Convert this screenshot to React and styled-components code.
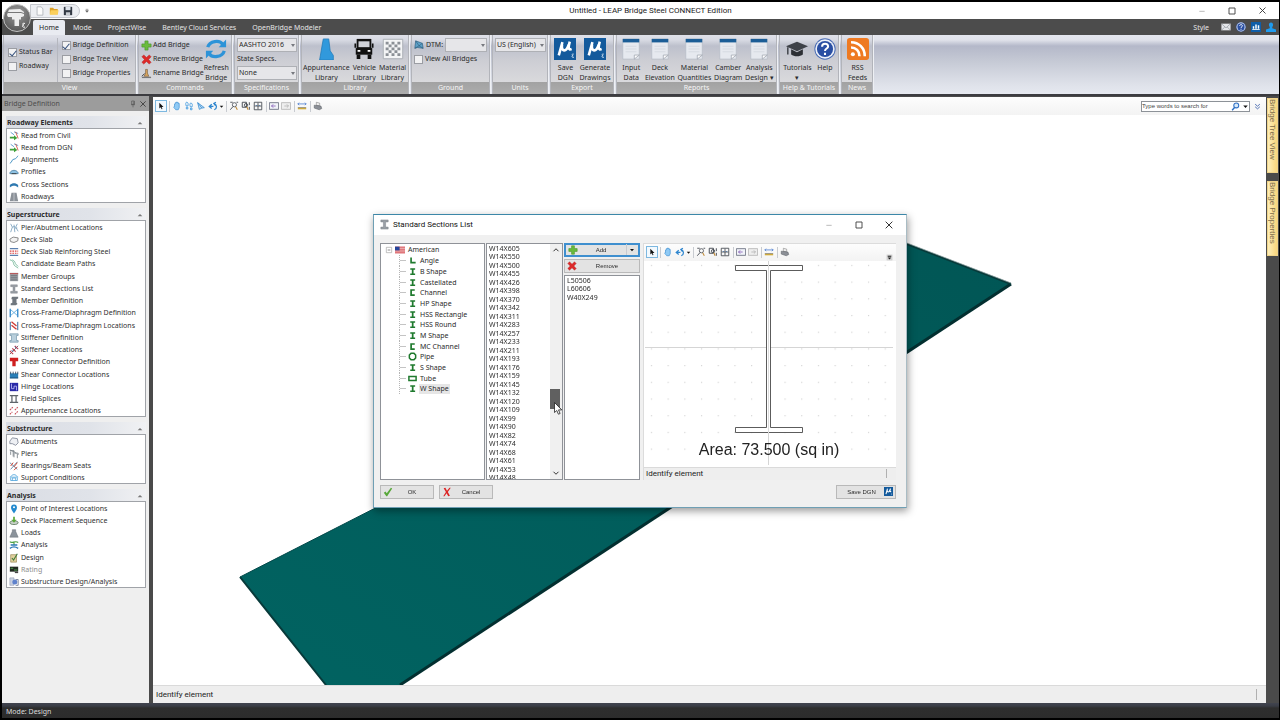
import React, { Component } from 'react';
import styled, { createGlobalStyle } from 'styled-components';

const GlobalStyle = createGlobalStyle`
    * {
        box-sizing: border-box;
    }

    body {
        margin: 0;
        background: #000;
        font-family: "Noto Sans", "Open Sans", sans-serif;
        font-size: 7px;
        line-height: 12px;
        color: #2b2b2b;
    }

    button, input, select {
        font: inherit;
        color: inherit;
        margin: 0;
    }

    ul {
        list-style: none;
        margin: 0;
        padding: 0;
    }

    svg {
        display: block;
        flex: none;
    }
`;

/* ---------- window frame ---------- */

const Frame = styled.div`
    display: flex;
    flex-direction: column;
    min-height: 100vh;
    padding: 2px 1px 2px 2px;
    background: #000;
`;

const TitleBar = styled.header`
    position: relative;
    display: grid;
    grid-template-columns: 1fr auto 1fr;
    align-items: center;
    height: 17px;
    padding-left: 20px;
    background: #fff;
`;

const Orb = styled.button`
    position: absolute;
    left: 0;
    top: 1px;
    z-index: 2;
    width: 30px;
    height: 30px;
    padding: 0;
    border: 0;
    background: none;
`;

const QuickAccess = styled.div`
    display: flex;
    align-items: center;
    gap: 3px;
    margin-left: 8px;
`;

const QuickPill = styled.div`
    display: flex;
    align-items: center;
    gap: 2px;
    height: 14px;
    padding: 0 5px 0 3px;
    border: 1px solid #c4c7cd;
    border-radius: 0 7px 7px 0;
    background: #eceef2;
`;

const PlainButton = styled.button`
    display: flex;
    align-items: center;
    justify-content: center;
    width: ${props => props.$w || 12}px;
    height: ${props => props.$h || 12}px;
    padding: 0;
    border: 1px solid ${props => (props.$on ? '#7db8e0' : 'transparent')};
    background: ${props => (props.$on ? '#f2f9fe' : 'none')};
`;

const WindowTitle = styled.h1`
    margin: 0;
    font-family: Roboto, sans-serif;
    font-size: 8px;
    font-weight: 400;
    color: #222;
`;

const WindowButtons = styled.div`
    display: flex;
    justify-content: flex-end;
    gap: 18px;
    padding-right: 11px;
`;

const TabBar = styled.nav`
    display: flex;
    align-items: flex-end;
    height: 16px;
    padding: 0 2px 0 31px;
    background: #4c4c4c;
`;

const Tab = styled.a`
    height: 15px;
    padding: 0 ${props => (props.$active ? 6 : 8)}px;
    line-height: 15px;
    text-decoration: none;
    white-space: nowrap;
    color: ${props => (props.$active ? '#222' : '#e4e4e4')};
    background: ${props => (props.$active ? '#e9ebf1' : 'none')};
    border-radius: 2px 2px 0 0;
`;

const TabTools = styled.div`
    display: flex;
    align-items: center;
    gap: 3px;
    height: 16px;
    margin-left: auto;
    color: #e4e4e4;
`;

/* ---------- ribbon ---------- */

const Ribbon = styled.div`
    display: flex;
    gap: 2px;
    height: 61px;
    padding: 0 1px;
    border-bottom: 2px solid #3c3c40;
    background: linear-gradient(#e4e6ee 0, #e0e2ea 5px, #b4b8c9 11px, #c3c7d3 24px, #dfe2ea 50px, #e6e9f0 59px);
`;

const Group = styled.section`
    display: flex;
    flex-direction: column;
    min-width: ${props => props.$w}px;
    border: solid #b2b4ba;
    border-width: 0 1px;
    box-shadow: 1px 0 #eef0f4;
    background: linear-gradient(#dfe0e8 0, #d8dae3 5px, #bdc0cc 11px, #cdced4 26px, #d9d9dc 47px);
`;

const GroupBody = styled.div`
    display: flex;
    flex: 1;
    min-height: 0;
    gap: ${props => props.$gap || 0}px;
    padding: 3px 1px 0 ${props => props.$left || 2}px;
    justify-content: ${props => (props.$spread ? 'space-around' : 'flex-start')};
`;

const GroupTitle = styled.h2`
    margin: 0;
    height: 12px;
    line-height: 12px;
    font-size: 7px;
    font-weight: 400;
    text-align: center;
    white-space: nowrap;
    color: #f6f6f6;
    background: linear-gradient(#a2a2a2, #adadad);
`;

const Stack = styled.div`
    display: flex;
    flex-direction: column;
    padding-top: ${props => props.$top || 0}px;
    padding-right: ${props => props.$right || 0}px;
    border-right: ${props => (props.$divided ? '1px solid #b5b7bf' : '0')};
    margin-right: ${props => props.$after || 0}px;
`;

const CheckRow = styled.label`
    display: flex;
    align-items: center;
    gap: 2px;
    height: 14px;
    white-space: nowrap;
`;

const CheckBox = styled.input`
    appearance: none;
    display: grid;
    place-items: center;
    width: 9px;
    height: 9px;
    border: 1px solid #9b9da3;
    background: #f2f2f3;

    &:checked::after {
        content: '';
        width: 3px;
        height: 6px;
        border: solid #35507c;
        border-width: 0 1px 1px 0;
        transform: rotate(40deg);
    }
`;

const SmallCommand = styled.button`
    display: flex;
    align-items: center;
    gap: 1px;
    height: 14px;
    padding: 0;
    border: 0;
    background: none;
    white-space: nowrap;
`;

const BigCommand = styled.button`
    display: flex;
    flex-direction: column;
    align-items: center;
    gap: 3px;
    padding: 0;
    border: 0;
    background: none;
    line-height: 10px;
    text-align: center;
    white-space: pre;
`;

const Caption = styled.span`
    display: block;
    height: 20px;
`;

const SelectBox = styled.span`
    position: relative;
    display: block;
    width: ${props => props.$w}px;
    height: 14px;

    &::after {
        content: '';
        position: absolute;
        right: 2px;
        top: 6px;
        border: 2px solid transparent;
        border-top: 3px solid #77797f;
        pointer-events: none;
    }

    select {
        appearance: none;
        display: block;
        width: 100%;
        height: 14px;
        padding: 0 1px;
        border: 1px solid #aeb0b5;
        border-radius: 0;
        background: #e6e6e9;
        line-height: 12px;
    }
`;

const FieldLabel = styled.label`
    height: 14px;
    line-height: 14px;
    white-space: nowrap;
`;

const Row = styled.div`
    display: flex;
    align-items: center;
    gap: ${props => props.$gap || 0}px;
`;

/* ---------- side panel ---------- */

const Workspace = styled.div`
    display: flex;
    flex: 1;
    background: #4a4a4a;
`;

const SidePanel = styled.aside`
    display: flex;
    flex-direction: column;
    width: 147px;
    margin-right: 4px;
    background: #efefef;
`;

const PanelHeader = styled.div`
    display: flex;
    align-items: center;
    height: 15px;
    padding: 0 1px 0 2px;
    color: #4d4d4d;
    background: #9c9c9c;

    span {
        flex: 1;
    }
`;

const PanelBody = styled.div`
    display: flex;
    flex-direction: column;
    gap: 5px;
    padding: 5px 3px 0 4px;
`;

const SectionHeader = styled.button`
    display: flex;
    align-items: center;
    justify-content: space-between;
    width: 100%;
    height: 12px;
    padding: 1px 2px 0 1px;
    border: 0;
    font-weight: 700;
    background: linear-gradient(90deg, #dadde4, #e0e3e9 60%, #f0f1f3);
`;

const SectionList = styled.ul`
    border: 1px solid #a0a3a8;
    background: #fff;

    li:nth-child(4n):not(:last-child) {
        margin-bottom: 1px;
    }
`;

const SectionLink = styled.a`
    display: flex;
    align-items: center;
    gap: 2px;
    height: 12px;
    padding: 1px 0 0 2px;
    color: ${props => (props.$disabled ? '#8c8c8c' : '#2f2f2f')};
    text-decoration: none;
    white-space: nowrap;
`;

/* ---------- view area ---------- */

const ViewArea = styled.main`
    display: flex;
    flex-direction: column;
    flex: 1;
    min-width: 0;
    margin-top: 1px;
    background: #fff;
`;

const ToolStrip = styled.div`
    display: flex;
    align-items: center;
    height: ${props => props.$h}px;
    padding: 0 ${props => props.$right}px 0 2px;
    background: linear-gradient(#fdfdfd, #f3f3f3);
`;

const ToolSeparator = styled.span`
    width: 1px;
    height: 11px;
    margin: 0 1px 0 2px;
    background: #c8cbd0;
`;

const ToolOverflow = styled.button`
    align-self: flex-end;
    width: 7px;
    height: 7px;
    margin-left: auto;
    padding: 0;
    border: 0;
    background: none;
`;

const SearchBox = styled.div`
    display: flex;
    align-items: center;
    width: 109px;
    height: 11px;
    margin: 0 2px 0 auto;
    border: 1px solid #8d9298;
    background: #fff;

    input {
        flex: 1;
        min-width: 0;
        height: 9px;
        padding: 0;
        border: 0;
        outline: 0;
        background: none;
        font-family: "Liberation Sans", Arial, sans-serif;
        font-size: 6px;
    }

    input::placeholder {
        color: #444;
        opacity: 1;
    }
`;

const Canvas = styled.div`
    flex: 1;
    min-height: 0;
    overflow: hidden;
`;

const PromptBar = styled.div`
    display: flex;
    justify-content: space-between;
    align-items: center;
    height: ${props => props.$h}px;
    padding: 0 9px 0 ${props => props.$left}px;
    border-top: 1px solid #dadada;
    background: #eee;
    font-family: Roboto, sans-serif;
    font-size: 8px;
    color: #222;

    &::after {
        content: '';
        width: 1px;
        height: 70%;
        background: #b0b0b0;
    }
`;

const DockStrip = styled.div`
    display: flex;
    flex-direction: column;
    gap: 8px;
    width: 13px;
    padding: 2px 1px 0;
`;

const DockTab = styled.button`
    height: 75px;
    padding: 0;
    border: 1px solid #f0d48a;
    background: linear-gradient(90deg, #fdeeb9, #f8d57c);
    writing-mode: vertical-rl;
    text-align: left;
    font-family: "Liberation Sans", Arial, sans-serif;
    font-size: 8px;
    line-height: 9px;
    white-space: nowrap;
    color: #7b6a48;
`;

const StatusBar = styled.footer`
    height: 15px;
    padding-left: 4px;
    line-height: 17px;
    color: #dcdcdc;
    background: linear-gradient(#41444f 0, #3a3d46 3px, #2e2e2e 5px, #2c2c2c);
`;

/* ---------- dialog ---------- */

const DialogLayer = styled.div`
    position: fixed;
    inset: 1px 0 0;
    display: flex;
    align-items: center;
    justify-content: center;
    pointer-events: none;
`;

const Dialog = styled.section`
    display: flex;
    flex-direction: column;
    width: 534px;
    border: 1px solid #6f9fb4;
    border-top-color: #3c87a8;
    border-right-color: #a9bcc4;
    background: #f0f0f0;
    box-shadow: 1px 3px 8px rgba(0, 0, 0, 0.4);
    pointer-events: auto;
`;

const DialogTitle = styled.div`
    display: flex;
    align-items: center;
    gap: 3px;
    height: 20px;
    padding-left: 5px;
    background: #fff;

    h2 {
        flex: 1;
        margin: 0;
        font-family: Roboto, sans-serif;
        font-size: 8px;
        font-weight: 400;
        color: #111;
    }
`;

const DialogBody = styled.div`
    display: grid;
    grid-template-columns: 105px 77px 76px 1fr;
    column-gap: 1px;
    height: 237px;
    margin: 8px 10px 5px 6px;
`;

const Well = styled.div`
    display: flex;
    flex: 1;
    min-width: 0;
    min-height: 0;
    overflow: hidden;
    border: 1px solid #8f9298;
    background: #fff;
`;

const Tree = styled.ul`
    padding: 1px 0 0 4px;

    ul {
        margin-left: 14px;
    }

    ul li:not(:nth-child(3n)) {
        margin-bottom: 1px;
    }
`;

const TreeRow = styled.span`
    display: flex;
    align-items: center;
    gap: 2px;
    height: ${props => (props.$root ? 11 : 10)}px;
    white-space: nowrap;

    b {
        padding: 0 1px;
        font-weight: 400;
        line-height: 10px;
        background: ${props => (props.$selected ? '#e6e6e6' : 'none')};
    }
`;

const Branch = styled.span`
    width: 7px;
    height: 11px;
    border-left: 1px dotted #b5b5b5;
    background: linear-gradient(#c4c4c4, #c4c4c4) 0 5px / 7px 1px no-repeat;
`;

const NameList = styled.ul`
    flex: 1;
    padding: 1px 0 0 2px;

    li {
        height: 8px;
        line-height: 8px;
    }

    li:nth-child(2n) {
        margin-bottom: 1px;
    }
`;

const ScrollTrack = styled.div`
    position: relative;
    display: flex;
    flex-direction: column;
    justify-content: space-between;
    width: 12px;
    background: #f0f0f0;
`;

const ScrollThumb = styled.div`
    position: absolute;
    left: 0;
    top: 62%;
    width: 10px;
    height: 20px;
    background: #606060;
`;

const Cursor = styled.svg`
    position: absolute;
    left: 4px;
    top: 13px;
    z-index: 3;
`;

const PickColumn = styled.div`
    display: flex;
    flex-direction: column;
    gap: 2px;
`;

const DialogButton = styled.button`
    display: flex;
    flex: none;
    align-items: center;
    width: ${props => (props.$w ? props.$w + 'px' : '100%')};
    height: 14px;
    padding: 0 2px;
    border: ${props => (props.$focus ? '2px solid #3f8fcf' : '1px solid #b9b9b9')};
    background: #e3e3e3;
    font-family: "Liberation Sans", Arial, sans-serif;
    font-size: 6px;
    line-height: 10px;

    span:first-of-type {
        flex: 1;
        text-align: center;
    }
`;

const Preview = styled.div`
    display: flex;
    flex-direction: column;
    min-width: 0;
    margin-left: 2px;
    border: 1px solid #dcdcdc;
    border-width: 1px 0 0 1px;
    background: #fff;
`;

const DialogActions = styled.div`
    display: flex;
    gap: 5px;
    padding: 0 10px 8px 6px;

    button:last-child {
        margin-left: auto;
    }
`;

/* ---------- drawings ---------- */

const ICONS = {
    civil: <g><path d="M2 1.5l4 3M6 1l5 2" stroke="#4a90c8" fill="none" /><path d="M8 1l3 8" stroke="#d04a3a" fill="none" /><path d="M1 7h5V5l4 3.5L6 11V9H1z" fill="#3fa03a" /></g>,
    align: <path d="M1 10C4 9 3 5 6 5s3-3 5-4" stroke="#3c8cc0" fill="none" strokeWidth="1.1" />,
    profile: <g><path d="M1 7c2-4 8-4 10 0v1H1z" fill="#8fc3e4" stroke="#3b6f96" strokeWidth=".8" /><path d="M3 8h6" stroke="#333" /></g>,
    cross: <path d="M1 6c3-3 7-3 10 0v3C8 6 4 6 1 9z" fill="#2f79b0" />,
    road: <g><path d="M3 1h6l2 10H1z" fill="#8b9198" /><path d="M5.600 1h.8v10h-.8z" fill="#d5d9de" /></g>,
    pierLoc: <path d="M2 1l2 4-2 6M4 5l3-1M6 2l1 9M10 1L8 5l3 5M7 6h3" stroke="#7aa0bd" fill="none" />,
    slab: <path d="M1 5l4-2.5 6 1L10.500 7 6 9 2 8z" fill="#f2f2f2" stroke="#777" />,
    rebar: <g><path d="M1 2h10M1 10h10" stroke="#5b7fae" strokeWidth="1.4" /><path d="M1 5h10M1 7.500h10" stroke="#d84343" strokeDasharray="2 1" strokeWidth="1.4" /></g>,
    paths: <path d="M1 1c5 1 4 4 5 6s3 2 5 4M4 1c4 2 3 4 4 5s2 2 3 3" stroke="#5cab86" fill="none" strokeWidth=".9" />,
    groups: <g><path d="M1 1h10v10H1z" fill="#a0a5ab" /><path d="M1 2h10" stroke="#c23a3a" /><path d="M2 4.500h8M2 7h8M2 9.500h8" stroke="#50555b" strokeWidth=".8" /></g>,
    beam: <path d="M2 1h8v2.200H7.200v5.600H10V11H2V8.800h2.800V3.200H2z" fill="#9aa0a6" stroke="#777d83" strokeWidth=".5" />,
    member: <path d="M4 1h7v2L9 4v4l1 1v1l-2 1H2V9l2-1V4H3V2z" fill="#70777e" />,
    frameDef: <g><path d="M1.500 1v10M10.500 1v10" stroke="#2f86c9" strokeWidth="1.600" /><path d="M2 2l8 7M10 2L2 9" stroke="#58a7dc" /></g>,
    frameLoc: <g><path d="M1.500 1v10M10.500 1v10" stroke="#34689c" strokeWidth="1.200" /><path d="M3 1l6 5M3 5l6 5" stroke="#cf3a35" strokeWidth="1.600" /></g>,
    stiff: <path d="M1 1h10v2H9v6h2v2H1V9h2V3H1z" fill="#b9cfdc" stroke="#6f93a8" strokeWidth=".8" />,
    stiffLoc: <g><path d="M1 11L11 1" stroke="#555" /><path d="M1 7l4 4M4 4l4 4M7 1l4 4" stroke="#c03b4c" strokeWidth="1.300" /><path d="M3 6l2 2M7 2l2 2" stroke="#3b55a0" /></g>,
    shear: <path d="M1 1h10v4H8v6H4V5H1z" fill="#cf1f1f" />,
    shearLoc: <g><path d="M1 4h10v6H1z" fill="#2a7fb8" /><path d="M2 2v3M5 2v3M8 2v3M10.500 2v3" stroke="#2a4058" /><path d="M1 9.500h10" stroke="#1d4d75" /></g>,
    hinge: <g><path d="M1 1h10v10H1z" fill="#2a2aa8" /><path d="M3 2v6h3V5h3v5" stroke="#bcbcf4" fill="none" /></g>,
    splice: <path d="M1 2h10M1 10h10M3.500 2v8M8.500 2v8" stroke="#5f656b" strokeWidth="1.500" />,
    appur: <path d="M1 5l4-4M1 10l3-3M7 5l4-4M7 10l4-4" stroke="#c74e58" strokeWidth="1.300" strokeDasharray="2 1" />,
    abut: <path d="M1 5l3-4 6 1 1 5-3 3-4-2H1z" fill="#eef0f4" stroke="#71798a" strokeWidth=".9" />,
    piers: <path d="M1 2h5v2M2 3v4M5 3v6M5 5h6v2M6 6v4M10 6v5M1 1l8 4" stroke="#767e86" fill="none" />,
    bearing: <g><path d="M1 2l9 8M2 10l8-9" stroke="#4f7ba0" /><path d="M6 7l4-5M6 11l4-4M2 6l3-4" stroke="#cf4b3a" strokeWidth="1.200" /></g>,
    support: <path d="M1 5h10M2 5c1-4 7-4 8 0M2 6v3h8V6M4 9V6h4v3" stroke="#53a6dc" fill="none" />,
    pin: <g><path d="M6 11.500C3 7 2.500 6 2.500 4.200a3.500 3.500 0 017 0C9.500 6 9 7 6 11.500z" fill="#2289cf" /><circle cx="6" cy="4" r="1.200" fill="#fff" /></g>,
    place: <g><path d="M1 8c0-3 10-3 10 0s-10 3-10 0z" fill="#c8d0c8" stroke="#5d7a5d" /><path d="M6 8L3 4.500h2V1h2v3.500h2z" fill="#58a634" /></g>,
    load: <path d="M4 4V2h4v2l3 7H1z" fill="#8b939b" stroke="#6a7178" strokeWidth=".6" />,
    analysis: <g><path d="M1 2c3 3 6-2 10 1M6 3v3" stroke="#4da044" fill="none" strokeWidth="1.400" /><path d="M2 6h8M1 10c3-2 7-2 10 0" stroke="#2f79b8" fill="none" strokeWidth="1.600" /></g>,
    design: <g><path d="M2 2h7v9H2z" fill="#e0cf9c" stroke="#8c7a45" strokeWidth=".7" /><path d="M3.500 6l2 2.500L10 1" stroke="#3e7a3a" fill="none" strokeWidth="1.300" /></g>,
    rating: <g><path d="M1 2h10v6H1z" fill="#222a22" /><path d="M2 4h3M6 6h4" stroke="#4fae4f" /><path d="M7 9h4" stroke="#444" strokeWidth="1.500" /></g>,
    sub: <g><path d="M1 1h5v9H1z" fill="#c8cfe0" stroke="#8892ac" strokeWidth=".6" /><circle cx="7" cy="6" r="3" fill="#5f82cc" /><path d="M8 3h3v7H8" stroke="#6b7690" fill="none" /></g>,

    plus: <path d="M4.300 1h3.400v3.300H11v3.400H7.700V11H4.300V7.700H1V4.300h3.300z" fill="#6abb3c" stroke="#4a962a" strokeWidth=".7" />,
    remove: <path d="M1 3l2-2 3 2.800L9 1l2 2-2.800 3L11 9l-2 2-3-2.800L3 11 1 9l2.800-3z" fill="#dd2a2a" stroke="#b01d1d" strokeWidth=".5" />,
    rename: <g><path d="M1 9.500h10v1.500H1z" fill="#777" /><path d="M3.500 9L5 5.500V1.500h2v4L8.500 9z" fill="#d9a760" stroke="#6a4c2a" strokeWidth=".6" /><path d="M1 9l3-3" stroke="#333" /></g>,
    dtm: <g><path d="M2 1l8 3 1 6-7-1-3 1z" fill="#5ea1c8" stroke="#2d5f82" strokeWidth=".8" /><path d="M2 1l4 6 5 3M10 4L6 7l-5 3" stroke="#234c68" fill="none" strokeWidth=".6" /></g>,
    check: <path d="M1 7l2-1.500 1.500 2L9.500 1l1.500.8L5 11H4z" fill="#58a83a" />,
    cancel: <path d="M2 1.500l2-.5 2 3.500L9 1h1.500L7 6l2.500 4.500-2 .5L5.500 7.500 3 11H1.500L4.700 6z" fill="#dc2323" />,

    pointer: <path d="M4 2v7l1.600-1.400L6.800 10l1-.5-1.100-2.200H9z" fill="#111" />,
    hand: <path d="M3 6.500V3.500h1V2h1.200V1.300h1.300V2h1.200v1h1v5L7.500 10.500h-3L2 7.500l.5-1z" fill="#8fcaf5" stroke="#2e86cf" strokeWidth=".7" />,
    feet: <g fill="none" stroke="#3c98de" strokeWidth="1"><path d="M3.200 1.500c2 0 2 2.500 1.500 4.500h-2c-.8-2-1-4.500.5-4.500zM2.800 7.500h1.800V9.500H2.800zM8.200 2.500c2 0 2 2.500 1.500 4.500h-2c-.8-2-1-4.500.5-4.500zM7.800 8.500h1.800v2H7.800z" /></g>,
    fly: <path d="M2 2l8 6-3 .5L4 10zM2 2l5 6.500" fill="#c4e1f6" stroke="#2e86cf" strokeWidth=".9" />,
    rotate: <g fill="none" stroke="#2e86cf" strokeWidth="1.500"><path d="M1.500 6.500h5M4.500 4L1.500 6.500l3 2.500" /><path d="M7.500 10.500c3.500-1 3.500-6 0-7.500M9.500 1.500L7 3l2 2.500" /></g>,
    zoom1: <g fill="none" stroke="#4a4f57"><path d="M1.500 1.500h3M9 1.500h2M1.500 10.500l3.500-4" strokeWidth="1.100" /><circle cx="6.500" cy="4.500" r="2.500" /><path d="M8 7l2 3.500" stroke="#c08a35" strokeWidth="1.300" /></g>,
    zoom2: <g fill="none" stroke="#3f444c"><path d="M1.500 1.500h5v6h-5zM10 1.500v3.500M10 7v3.500" strokeWidth="1.100" /><circle cx="6" cy="5" r="2" /><path d="M7 7l1.500 3.500" stroke="#c08a35" strokeWidth="1.300" /></g>,
    fit: <g fill="none" stroke="#3f444c"><path d="M1.500 1.500h9v9h-9zM6 2v8M2 6h8" /><path d="M3.500 6l1-1M8.500 6l-1-1" stroke="#2b6ab0" /></g>,
    prev: <g><path d="M.5 2h11v8H.5z" fill="#f1f3f9" stroke="#555b6e" strokeWidth=".9" /><path d="M5 4L3 6l2 2M3 6h5" stroke="#7a4fb0" fill="none" strokeWidth=".9" /></g>,
    next: <g><path d="M.5 2h11v8H.5z" fill="#eee" stroke="#adadad" strokeWidth=".9" /><path d="M7 4l2 2-2 2M4 6h5" stroke="#adadad" fill="none" strokeWidth=".9" /></g>,
    measure: <g><path d="M1 3.500h10M2.500 2L1 3.500 2.500 5M9.500 2L11 3.500 9.500 5" stroke="#3f74cc" fill="none" strokeWidth=".9" /><path d="M1 8h10v2H1z" fill="#d9b23c" /><path d="M1 8h10" stroke="#555" strokeWidth=".7" /></g>,
    print: <g><path d="M4 1.500l4 1v3H4z" fill="#ededed" stroke="#777" strokeWidth=".6" /><path d="M1.500 5l8 1 1 3-3 1.500-6-2z" fill="#8c9097" stroke="#55595f" strokeWidth=".6" /></g>,
    caret: <path d="M3 4.500h6L6 8z" fill="#111" />,
    up: <path d="M2.500 8h7L6 4.500z" fill="#777" />,
    down2: <path d="M2 2l4 3.500L10 2M2 6.500L6 10l4-3.500" stroke="#3e62ad" fill="none" strokeWidth="1.500" />,
    lens: <g><circle cx="7" cy="4.500" r="3.300" fill="#d9ebfa" stroke="#2f6fc4" strokeWidth="1.400" /><path d="M5 7l-3.500 4" stroke="#2b6fc4" strokeWidth="1.800" /></g>,
    pushpin: <path d="M4 1.500h4v5H4zM3 7h6M6 7v4M7.300 2v4" stroke="#555" fill="none" />,
    x: <path d="M2 2l8 8M10 2l-8 8" stroke="#333" fill="none" strokeWidth="1.200" />,
    min: <path d="M2 6.500h8" stroke="#999" />,
    max: <path d="M1.500 1.500h9v9h-9z" stroke="#444" fill="none" strokeWidth="1.400" />,
    scrollUp: <path d="M3 7.500L6 4.500l3 3" stroke="#333" fill="none" strokeWidth="1.200" />,
    scrollDown: <path d="M3 4.500l3 3 3-3" stroke="#333" fill="none" strokeWidth="1.200" />,
    overflow: <g><path d="M1 1h10v10H1z" fill="#d0d0d0" /><path d="M3 6h6L6 9.500zM3 3h6v1.500H3z" fill="#222" /></g>,

    file: <path d="M2.500 1h5l2 2.500V11h-7z" fill="#fcfcfc" stroke="#adb1b8" />,
    folder: <g><path d="M1 2h4l1 1.500h4.500V10H1z" fill="#dca127" /><path d="M2 5h9.500l-1 5.500H1z" fill="#fbd05c" /></g>,
    save: <g><path d="M1 1h10v10H1z" fill="#333a44" /><path d="M3 1h6v4H3z" fill="#dce2ea" /><path d="M3.500 7.500h5V11h-5z" fill="#c9cdd2" /></g>,
    more: <path d="M4 3.500h4M4 5.500h4L6 8z" stroke="#555" fill="#555" strokeWidth=".8" />,
    mail: <g><path d="M.5 2h11v8H.5z" fill="#e4e6ea" /><path d="M.5 2L6 7l5.500-5M.5 10L4.500 6M11.500 10l-4-4" stroke="#8a8f98" fill="none" strokeWidth=".8" /></g>,
    chart: <g><path d="M0 0h12v12H0z" fill="#0f5ea8" /><path d="M3 5v3M6 3v5M9 4v4" stroke="#fff" strokeWidth="1.800" /><path d="M1.500 9h9" stroke="#fff" /></g>,
    user: <path d="M6 .5c3 0 3 4 1.500 5.500v1.500L12 9v3H0V9l4.500-1.500V6C3 4.500 3 .5 6 .5z" fill="#1f9bef" />,
    help: <g><circle cx="6" cy="6" r="5.800" fill="#4a6cb4" /><circle cx="6" cy="6" r="5.300" fill="#edf1f9" /><circle cx="6" cy="6" r="4.400" fill="#2a4fa3" /><path d="M4.400 4.800c0-2.200 3.300-2.200 3.300-.2C7.700 5.800 6 5.700 6 7.100M6 8.100v1.200" stroke="#fff" fill="none" strokeWidth="1.100" /></g>,
    flag: <g><path d="M0 2h12v8H0z" fill="#f4dede" /><path d="M0 2.600h12M0 5h12M0 7.200h12M0 9.400h12" stroke="#d2353c" strokeWidth="1.100" /><path d="M0 2h5.500v4.500H0z" fill="#24439a" /></g>,
    minusBox: <g><path d="M2 2h8v8H2z" fill="#fff" stroke="#a5a5a5" /><path d="M4 6h4" stroke="#555" /></g>,
    shL: <path d="M3 2h2.200v5.500h5V10H3z" fill="#1f7a2e" />,
    shI: <path d="M3 1.500h6.500v2H7.400v5h2.100v2H3v-2h2.100v-5H3z" fill="#1f7a2e" />,
    shC: <path d="M3 1.500h6v2.200H5.300v4.600H9v2.200H3z" fill="#1f7a2e" />,
    shO: <path d="M4 1.800h4l2.200 2.200v4L8 10.200H4L1.800 8V4z" fill="#fff" stroke="#1f7a2e" strokeWidth="2" />,
    shT: <path d="M1.200 3.200h9.600v5.600H1.200z" fill="#fff" stroke="#1f7a2e" strokeWidth="2" />,
    mu: <g><path d="M0 0h12v12H0z" fill="#135a9c" /><path d="M4.600 2.300L2.600 9.500M4.400 3.600c-.7 4 2.400 4.400 3.600 0M8.600 2c-.8 3-1 4.800 1 4" stroke="#fff" fill="none" strokeWidth="1.400" /><path d="M10.800 8.800c-1.200-.3-1.200.8-.4.8-.9 0-.9 1.200.5.900" stroke="#cfe0f2" fill="none" strokeWidth=".5" /></g>,

    // large ribbon drawings
    refresh: <g fill="none" stroke="#2d93d8" strokeWidth="1.800"><path d="M1.500 5C2.500 1.500 8 .8 9.700 3.500" /><path d="M10.500 7C9.500 10.500 4 11.200 2.300 8.500" /><path d="M11.500.8V5H7.500zM.5 11.200V7h4z" fill="#2d93d8" stroke="none" /></g>,
    barrier: <path d="M4.500.5h3l.8 6.500 1.700 2.500V12H2.500z" fill="#3199dc" stroke="#1e78b8" strokeWidth=".4" />,
    truck: <g><path d="M2 .5h8v7H2z" fill="#111" /><path d="M3 1.800h6v3.200H3z" fill="#cfd1d8" /><path d="M1.500 5.500h9v3.600h-9z" fill="#111" /><path d="M2 9h2v2.500H2zM8 9h2v2.500H8zM.8 3h.9v2.300H.8zM10.300 3h.9v2.300h-.9z" fill="#111" /><path d="M2.500 6.500h1.500v1H2.500zM8 6.500h1.500v1H8z" fill="#fff" /></g>,
    material: <g><path d="M.7.700h10.600v10.600H.7z" fill="#f4f5f6" stroke="#a8adb3" strokeWidth=".5" /><path d="M2 2.800h8M2 5.900h8M2 9h8" stroke="#8b9096" strokeWidth="1.500" strokeDasharray="1.600 1.600" /><path d="M3.600 4.350h6.400M3.600 7.450h6.400" stroke="#8b9096" strokeWidth="1.500" strokeDasharray="1.600 1.600" /></g>,
    report: <g><path d="M1.500.5h9v11h-9z" fill="#e6e9ef" stroke="#b7bcc6" strokeWidth=".4" /><path d="M1.500.5h9v1.900h-9z" fill="#1b5d96" /><path d="M7.800 11.500V9.300h2.700z" fill="#fff" stroke="#9ba1ab" strokeWidth=".4" /><path d="M3 4.500h6M3 6h6M3 7.500h6" stroke="#cfd4dc" strokeWidth=".4" /></g>,
    cap: <g><path d="M0 4.500L6 2l6 2.500L6 7.200z" fill="#3d4148" /><path d="M2.800 6.200V9c1.600 1.300 4.800 1.300 6.400 0V6.200L6 7.800z" fill="#2c2f35" /><path d="M1 5v4" stroke="#2c2f35" strokeWidth=".7" /></g>,
    rss: <g><rect width="12" height="12" rx="1.500" fill="#ee7a22" /><circle cx="3.200" cy="8.900" r="1.100" fill="#fff" /><path d="M2.200 5.200c2.700 0 4.600 1.900 4.600 4.700M2.200 2.300c4.300 0 7.500 3.200 7.500 7.600" stroke="#fff" fill="none" strokeWidth="1.400" /></g>
};

const Icon = ({ name, size = 10 }) => (
    <svg width={size} height={size} viewBox="0 0 12 12" aria-hidden="true">{ICONS[name]}</svg>
);

const SECTIONS = [
    {
        title: 'Roadway Elements',
        items: [
            ['civil', 'Read from Civil'], ['civil', 'Read from DGN'], ['align', 'Alignments'],
            ['profile', 'Profiles'], ['cross', 'Cross Sections'], ['road', 'Roadways']
        ]
    },
    {
        title: 'Superstructure',
        items: [
            ['pierLoc', 'Pier/Abutment Locations'], ['slab', 'Deck Slab'], ['rebar', 'Deck Slab Reinforcing Steel'],
            ['paths', 'Candidate Beam Paths'], ['groups', 'Member Groups'], ['beam', 'Standard Sections List'],
            ['member', 'Member Definition'], ['frameDef', 'Cross-Frame/Diaphragm Definition'],
            ['frameLoc', 'Cross-Frame/Diaphragm Locations'], ['stiff', 'Stiffener Definition'],
            ['stiffLoc', 'Stiffener Locations'], ['shear', 'Shear Connector Definition'],
            ['shearLoc', 'Shear Connector Locations'], ['hinge', 'Hinge Locations'],
            ['splice', 'Field Splices'], ['appur', 'Appurtenance Locations']
        ]
    },
    {
        title: 'Substructure',
        items: [
            ['abut', 'Abutments'], ['piers', 'Piers'], ['bearing', 'Bearings/Beam Seats'], ['support', 'Support Conditions']
        ]
    },
    {
        title: 'Analysis',
        items: [
            ['pin', 'Point of Interest Locations'], ['place', 'Deck Placement Sequence'], ['load', 'Loads'],
            ['analysis', 'Analysis'], ['design', 'Design'], ['rating', 'Rating', true],
            ['sub', 'Substructure Design/Analysis']
        ]
    }
];

const SHAPES = [
    ['shL', 'Angle'], ['shI', 'B Shape'], ['shI', 'Castellated'], ['shC', 'Channel'], ['shI', 'HP Shape'],
    ['shI', 'HSS Rectangle'], ['shI', 'HSS Round'], ['shI', 'M Shape'], ['shC', 'MC Channel'],
    ['shO', 'Pipe'], ['shI', 'S Shape'], ['shT', 'Tube'], ['shI', 'W Shape']
];

const WEIGHTS = [
    605, 550, 500, 455, 426, 398, 370, 342, 311, 283, 257, 233, 211, 193, 176,
    159, 145, 132, 120, 109, 99, 90, 82, 74, 68, 61, 53, 48
];

const Check = ({ label, checked }) => (
    <CheckRow><CheckBox type="checkbox" defaultChecked={checked} />{label}</CheckRow>
);

const Big = ({ icon, label, size = 22 }) => (
    <BigCommand><Icon name={icon} size={size} /><Caption>{label}</Caption></BigCommand>
);

const Drop = ({ id, w, value, label }) => (
    <SelectBox $w={w}>
        <select id={id} aria-label={label} defaultValue={value}><option>{value}</option></select>
    </SelectBox>
);

const RibbonGroup = ({ title, w, left, gap, spread, children }) => (
    <Group $w={w}>
        <GroupBody $left={left} $gap={gap} $spread={spread}>{children}</GroupBody>
        <GroupTitle>{title}</GroupTitle>
    </Group>
);

// "|" puts a separator between two runs of tools
const Tools = ({ names }) => names.map((name, i) => (
    name === '|'
        ? <ToolSeparator key={i} />
        : <PlainButton key={i} aria-label={name} $w={name === 'caret' ? 5 : 12} $on={name === 'pointer'}>
            <Icon name={name} size={name === 'caret' ? 7 : 10} />
        </PlainButton>
));

const Deck = () => (
    <svg width="1113" height="570" viewBox="0 0 1113 570" aria-hidden="true">
        <defs>
            <linearGradient id="deck" x1="0" y1="1" x2="1" y2="0">
                <stop offset="0" stopColor="#016361" />
                <stop offset="1" stopColor="#015655" />
            </linearGradient>
        </defs>
        <path d="M87 462L746 126L858 169L247 570H173z" fill="url(#deck)" />
        <path d="M858 169L247 570" stroke="#032f30" strokeWidth="3" />
        <path d="M746 126L858 169M87 462L173 570" stroke="#083a3a" strokeWidth="2" />
        <path d="M87 462L746 126" stroke="#04494a" />
        <path d="M754 128L858 168" stroke="#9aa9a9" strokeWidth=".7" />
    </svg>
);

const Section = () => (
    <svg width="100%" height="206" viewBox="0 0 250 206" preserveAspectRatio="xMinYMin meet">
        <defs>
            <pattern id="dots" x="-1" y="-4" width="16.700" height="16.700" patternUnits="userSpaceOnUse">
                <rect x="8" y="8" width="1" height="1" fill="#c4c4c4" />
            </pattern>
        </defs>
        <rect width="248" height="204" fill="url(#dots)" />
        <path d="M1 86.500h248M124.500 0v204" stroke="#d5d5d5" />
        <path d="M91.500 4.500h67v5h-32v157h32v5h-67v-5h31v-157h-31z" fill="#fff" stroke="#4a4a4a" strokeWidth=".9" />
        <path d="M124.500 4v168" stroke="#dcdcdc" />
        <text x="125" y="194" textAnchor="middle" fontFamily="Liberation Sans, Arial, sans-serif" fontSize="16" fill="#222">Area: 73.500 (sq in)</text>
    </svg>
);

class SectionsDialog extends Component {
    state = {
        shape: 'W Shape',
        picked: ['L50506', 'L60606', 'W40X249']
    }

    render() {
        return (
            <DialogLayer>
                <Dialog role="dialog" aria-label="Standard Sections List">
                    <DialogTitle>
                        <Icon name="beam" size={11} />
                        <h2>Standard Sections List</h2>
                        <WindowButtons>
                            <PlainButton aria-label="Minimize"><Icon name="min" size={8} /></PlainButton>
                            <PlainButton aria-label="Maximize"><Icon name="max" size={8} /></PlainButton>
                            <PlainButton aria-label="Close"><Icon name="x" size={10} /></PlainButton>
                        </WindowButtons>
                    </DialogTitle>
                    <DialogBody>
                        <Well>
                            <Tree>
                                <li>
                                    <TreeRow $root><Icon name="minusBox" size={8} /><Icon name="flag" size={10} /><b>American</b></TreeRow>
                                    <ul>
                                        {SHAPES.map(([icon, name]) => (
                                            <li key={name}>
                                                <TreeRow $selected={name === this.state.shape}>
                                                    <Branch /><Icon name={icon} size={9} /><b>{name}</b>
                                                </TreeRow>
                                            </li>
                                        ))}
                                    </ul>
                                </li>
                            </Tree>
                        </Well>
                        <Well>
                            <NameList>
                                {WEIGHTS.map(w => <li key={w}>W14X{w}</li>)}
                            </NameList>
                            <ScrollTrack>
                                <PlainButton $w={11} aria-label="Scroll up"><Icon name="scrollUp" /></PlainButton>
                                <ScrollThumb>
                                    <Cursor width="9" height="13" viewBox="0 0 9 13">
                                        <path d="M.5.500v10l2.300-2 1.600 3.700 1.700-.7-1.600-3.600h3.300z" fill="#fff" stroke="#222" strokeWidth=".8" />
                                    </Cursor>
                                </ScrollThumb>
                                <PlainButton $w={11} aria-label="Scroll down"><Icon name="scrollDown" /></PlainButton>
                            </ScrollTrack>
                        </Well>
                        <PickColumn>
                            <DialogButton $focus><Icon name="plus" /><span>Add</span><ToolSeparator /><Icon name="caret" size={8} /></DialogButton>
                            <DialogButton><Icon name="remove" /><span>Remove</span></DialogButton>
                            <Well>
                                <NameList>
                                    {this.state.picked.map(name => <li key={name}>{name}</li>)}
                                </NameList>
                            </Well>
                        </PickColumn>
                        <Preview>
                            <ToolStrip $h={17} $right={3}>
                                <Tools names={['pointer', '|', 'hand', 'rotate', 'caret', '|', 'zoom1', 'zoom2', 'fit', '|', 'prev', 'next', '|', 'measure', '|', 'print']} />
                                <ToolOverflow aria-label="More tools"><Icon name="overflow" size={7} /></ToolOverflow>
                            </ToolStrip>
                            <Canvas><Section /></Canvas>
                            <PromptBar $h={13} $left={2}>Identify element</PromptBar>
                        </Preview>
                    </DialogBody>
                    <DialogActions>
                        <DialogButton $w={54}><Icon name="check" /><span>OK</span></DialogButton>
                        <DialogButton $w={54}><Icon name="cancel" /><span>Cancel</span></DialogButton>
                        <DialogButton $w={60}><span>Save DGN</span><Icon name="mu" size={9} /></DialogButton>
                    </DialogActions>
                </Dialog>
            </DialogLayer>
        )
    }
}

class App extends Component {
    render() {
        const ribbon = (
            <Ribbon>
                <RibbonGroup title="View" w={133} left={4}>
                    <Stack $top={7} $right={4} $divided $after={4}>
                        <Check label="Status Bar" checked />
                        <Check label="Roadway" />
                    </Stack>
                    <Stack>
                        <Check label="Bridge Definition" checked />
                        <Check label="Bridge Tree View" />
                        <Check label="Bridge Properties" />
                    </Stack>
                </RibbonGroup>
                <RibbonGroup title="Commands" w={94}>
                    <Stack>
                        <SmallCommand><Icon name="plus" size={11} />Add Bridge</SmallCommand>
                        <SmallCommand><Icon name="remove" size={11} />Remove Bridge</SmallCommand>
                        <SmallCommand><Icon name="rename" size={11} />Rename Bridge</SmallCommand>
                    </Stack>
                    <Big icon="refresh" label={'Refresh\nBridge'} />
                </RibbonGroup>
                <RibbonGroup title="Specifications" w={65}>
                    <Stack>
                        <Drop w={60} value="AASHTO 2016" label="Specification" />
                        <FieldLabel htmlFor="state-specs">State Specs.</FieldLabel>
                        <Drop id="state-specs" w={60} value="None" />
                    </Stack>
                </RibbonGroup>
                <RibbonGroup title="Library" w={108} left={1} gap={3}>
                    <Big icon="barrier" label={'Appurtenance\nLibrary'} />
                    <Big icon="truck" label={'Vehicle\nLibrary'} />
                    <Big icon="material" label={'Material\nLibrary'} />
                </RibbonGroup>
                <RibbonGroup title="Ground" w={79}>
                    <Stack>
                        <Row $gap={2}>
                            <Icon name="dtm" />
                            <FieldLabel htmlFor="dtm">DTM:</FieldLabel>
                            <Drop id="dtm" w={42} value="" />
                        </Row>
                        <Check label="View All Bridges" />
                    </Stack>
                </RibbonGroup>
                <RibbonGroup title="Units" w={56}>
                    <Drop w={51} value="US (English)" label="Units" />
                </RibbonGroup>
                <RibbonGroup title="Export" w={64} spread>
                    <Big icon="mu" label={'Save\nDGN'} />
                    <Big icon="mu" label={'Generate\nDrawings'} />
                </RibbonGroup>
                <RibbonGroup title="Reports" w={161} spread>
                    <Big icon="report" label={'Input\nData'} />
                    <Big icon="report" label={'Deck\nElevation'} />
                    <Big icon="report" label={'Material\nQuantities'} />
                    <Big icon="report" label={'Camber\nDiagram'} />
                    <Big icon="report" label={'Analysis\nDesign ▾'} />
                </RibbonGroup>
                <RibbonGroup title="Help & Tutorials" w={60} spread>
                    <Big icon="cap" label={'Tutorials\n▾'} />
                    <Big icon="help" label="Help" />
                </RibbonGroup>
                <RibbonGroup title="News" w={32} spread>
                    <Big icon="rss" label={'RSS\nFeeds'} />
                </RibbonGroup>
            </Ribbon>
        )

        const sidePanel = (
            <SidePanel>
                <PanelHeader>
                    <span>Bridge Definition</span>
                    <PlainButton $w={10} aria-label="Pin"><Icon name="pushpin" size={8} /></PlainButton>
                    <PlainButton $w={10} aria-label="Close panel"><Icon name="x" size={8} /></PlainButton>
                </PanelHeader>
                <PanelBody>
                    {SECTIONS.map(section => (
                        <section key={section.title}>
                            <SectionHeader>{section.title}<Icon name="up" size={8} /></SectionHeader>
                            <SectionList>
                                {section.items.map(([icon, label, disabled]) => (
                                    <li key={label}>
                                        <SectionLink href="#" $disabled={disabled}><Icon name={icon} />{label}</SectionLink>
                                    </li>
                                ))}
                            </SectionList>
                        </section>
                    ))}
                </PanelBody>
            </SidePanel>
        )

        return (
            <Frame>
                <GlobalStyle />
                <TitleBar>
                    <Orb aria-label="Application menu">
                        <svg width="30" height="30" viewBox="0 0 30 30">
                            <defs>
                                <radialGradient id="orb" cx=".5" cy=".3" r=".8">
                                    <stop offset="0" stopColor="#9b9b9b" />
                                    <stop offset="1" stopColor="#4e4e4e" />
                                </radialGradient>
                            </defs>
                            <circle cx="15" cy="15" r="13.500" fill="url(#orb)" stroke="#c2c2c2" />
                            <path d="M7 6.500l11-.5 4 3v4l-2 1H6l-1-2z" fill="#ededed" />
                            <path d="M6 9.500h13l3 1" stroke="#777" fill="none" />
                            <path d="M10 14h9v2.500h-2V23h-4.500v-6.500H10z" fill="#ededed" />
                            <path d="M23 20.500c-3-1-3 1.500-1 1.500-2.500 0-2 3 1 2" stroke="#fff" fill="none" />
                        </svg>
                    </Orb>
                    <QuickAccess>
                        <QuickPill>
                            <PlainButton aria-label="New"><Icon name="file" /></PlainButton>
                            <PlainButton aria-label="Open"><Icon name="folder" /></PlainButton>
                            <PlainButton aria-label="Save"><Icon name="save" /></PlainButton>
                        </QuickPill>
                        <PlainButton $w={8} aria-label="More"><Icon name="more" size={8} /></PlainButton>
                    </QuickAccess>
                    <WindowTitle>Untitled - LEAP Bridge Steel CONNECT Edition</WindowTitle>
                    <WindowButtons>
                        <PlainButton aria-label="Minimize"><Icon name="min" size={8} /></PlainButton>
                        <PlainButton aria-label="Maximize"><Icon name="max" size={8} /></PlainButton>
                        <PlainButton aria-label="Close"><Icon name="x" size={9} /></PlainButton>
                    </WindowButtons>
                </TitleBar>
                <TabBar>
                    <Tab href="#" $active>Home</Tab>
                    <Tab href="#">Mode</Tab>
                    <Tab href="#">ProjectWise</Tab>
                    <Tab href="#">Bentley Cloud Services</Tab>
                    <Tab href="#">OpenBridge Modeler</Tab>
                    <TabTools>
                        <Tab as="span">Style</Tab>
                        <PlainButton aria-label="Mail"><Icon name="mail" /></PlainButton>
                        <PlainButton aria-label="Help"><Icon name="help" /></PlainButton>
                        <PlainButton aria-label="Statistics"><Icon name="chart" /></PlainButton>
                        <PlainButton aria-label="Account"><Icon name="user" /></PlainButton>
                    </TabTools>
                </TabBar>
                {ribbon}
                <Workspace>
                    {sidePanel}
                    <ViewArea>
                        <ToolStrip $h={18} $right={4}>
                            <Tools names={['pointer', '|', 'hand', 'feet', 'fly', 'rotate', 'caret', '|', 'zoom1', 'zoom2', 'fit', '|', 'prev', 'next', '|', 'measure', '|', 'print']} />
                            <SearchBox>
                                <input type="text" placeholder="Type words to search for" aria-label="Search" />
                                <PlainButton $h={9} aria-label="Search"><Icon name="lens" size={9} /></PlainButton>
                                <PlainButton $h={9} $w={8} aria-label="Search options"><Icon name="caret" size={9} /></PlainButton>
                            </SearchBox>
                            <PlainButton $w={10} aria-label="Expand"><Icon name="down2" size={7} /></PlainButton>
                        </ToolStrip>
                        <Canvas><Deck /></Canvas>
                        <PromptBar $h={18} $left={3}>Identify element</PromptBar>
                    </ViewArea>
                    <DockStrip>
                        <DockTab>Bridge Tree View</DockTab>
                        <DockTab>Bridge Properties</DockTab>
                    </DockStrip>
                </Workspace>
                <StatusBar>Mode: Design</StatusBar>
                <SectionsDialog />
            </Frame>
        )
    }
}

export default App;
